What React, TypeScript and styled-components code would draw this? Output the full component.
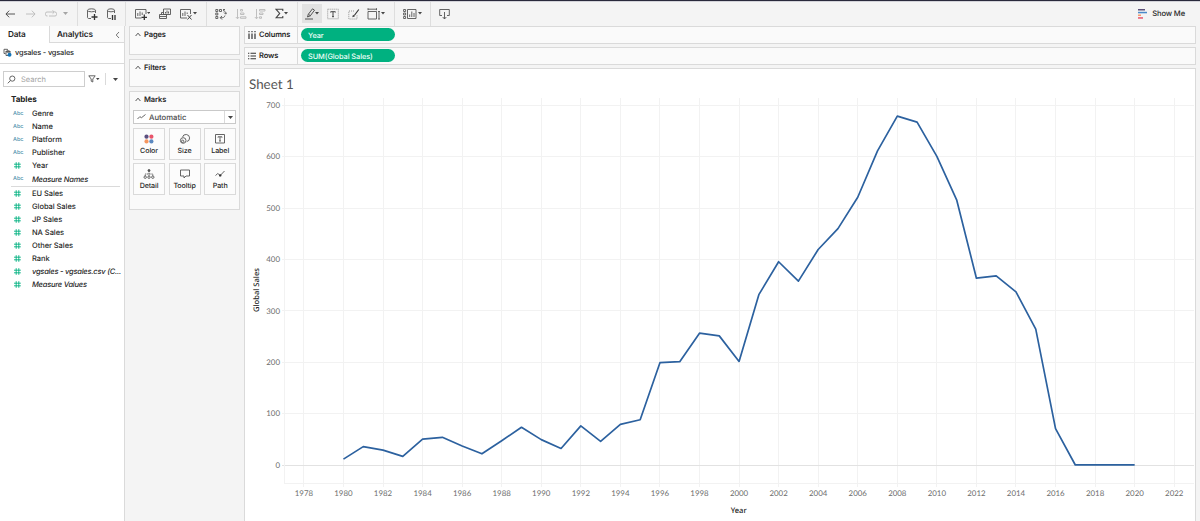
import type { ReactNode } from 'react';
import styled, { createGlobalStyle, css } from 'styled-components';

const color = {
	text: '#262626',
	muted: '#b9b9b9',
	border: '#dadada',
	surface: '#fafafa',
	background: '#f4f4f4',
	green: '#00b180',
	line: '#2c619f',
	dimension: '#4f93ad'
};

const GlobalStyle = createGlobalStyle`
	* {
		box-sizing: border-box;
	}
	body {
		background: ${color.background};
		color: ${color.text};
		font-family: Inter, 'Liberation Sans', sans-serif;
		font-size: 7.5px;
		font-weight: 500;
		margin: 0;
		overflow: hidden;
		text-rendering: geometricPrecision;
	}
	svg {
		display: block;
		flex: none;
	}
`;

const Page = styled.div`
	border-top: 1px solid #2a2a3c;
	display: flex;
	flex-direction: column;
	height: 521px;
	width: 1200px;
`;

const Toolbar = styled.div`
	align-items: stretch;
	border-top: 1px solid #d3d3d9;
	display: flex;
	height: 25px;
`;
const ToolGroup = styled.div<{ $width: number; $last?: boolean }>`
	border-right: ${p => (p.$last ? 'none' : '1px solid #dedede')};
	display: flex;
	padding-left: 4px;
	width: ${p => p.$width}px;
`;
const Tool = styled.div<{ $width: number; $active?: boolean }>`
	align-items: center;
	background: ${p => (p.$active ? '#e2e2e2' : 'none')};
	display: flex;
	justify-content: center;
	height: 19px;
	margin-top: 2px;
	width: ${p => p.$width}px;
`;
const ShowMe = styled.div`
	align-items: center;
	display: flex;
	font-size: 7.6px;
	gap: 5px;
	height: 23px;
	letter-spacing: -0.12px;
	margin-left: auto;
	padding-right: 15px;
`;

const Body = styled.div`
	display: flex;
	flex: 1;
	min-height: 0;
`;

const DataPane = styled.aside`
	background: #fff;
	border-right: 1px solid ${color.border};
	width: 125px;
`;
const Tabs = styled.div`
	display: flex;
	font-size: 8.2px;
	font-weight: 600;
	height: 17px;
	letter-spacing: -0.15px;
	line-height: 17px;
`;
const ActiveTab = styled.div`
	padding-left: 8px;
	width: 49px;
`;
const Tab = styled.div`
	align-items: center;
	background: ${color.surface};
	border-bottom: 1px solid ${color.border};
	border-left: 1px solid ${color.border};
	display: flex;
	flex: 1;
	justify-content: space-between;
	padding: 1px 4px 0 7px;
`;
const Source = styled.div`
	align-items: center;
	border-bottom: 1px solid ${color.border};
	display: flex;
	font-size: 7.4px;
	gap: 3px;
	height: 21px;
	letter-spacing: -0.15px;
	padding: 0 0 1px 3px;
`;
const SearchRow = styled.div`
	align-items: center;
	display: flex;
	height: 16px;
	margin: 7px 0 0 3px;
`;
const SearchBox = styled.div`
	align-items: center;
	background: #fff;
	border: 1px solid #cecece;
	color: #a3a3a3;
	display: flex;
	font-size: 7.5px;
	font-weight: 400;
	gap: 5px;
	height: 16px;
	padding-left: 3px;
	width: 82px;
`;
const FilterMenu = styled.div`
	border-right: 1px solid ${color.border};
	display: flex;
	height: 12px;
	align-items: center;
	margin-right: 7px;
	padding-left: 3px;
	width: 21px;
`;
const TablesTitle = styled.h3`
	font-size: 8.1px;
	font-weight: 700;
	letter-spacing: -0.1px;
	line-height: 12px;
	margin: 6px 0 2px 11px;
`;
const FieldList = styled.div<{ $divided?: boolean }>`
	margin: 0 4px 0 11px;
	${p =>
		p.$divided &&
		css`
			border-top: 1px solid ${color.border};
		`}
`;
const Field = styled.div<{ $italic?: boolean }>`
	align-items: center;
	display: flex;
	font-style: ${p => (p.$italic ? 'italic' : 'normal')};
	height: 13.12px;
	letter-spacing: ${p => (p.$italic ? '-0.22px' : '-0.05px')};
	white-space: nowrap;
`;
const FieldKind = styled.span`
	color: ${color.dimension};
	display: flex;
	flex: none;
	font-size: 5.5px;
	font-style: normal;
	font-weight: 500;
	letter-spacing: 0;
	padding-left: 2px;
	width: 21px;
`;

const Cards = styled.div`
	display: flex;
	flex-direction: column;
	gap: 4px;
	padding: 0 4px;
	width: 119px;
`;
const Card = styled.section<{ $height: number }>`
	background: ${color.surface};
	border: 1px solid ${color.border};
	height: ${p => p.$height}px;
`;
const CardTitle = styled.div`
	align-items: center;
	display: flex;
	font-size: 7.5px;
	font-weight: 600;
	gap: 3px;
	height: 15px;
	letter-spacing: -0.1px;
	padding-left: 5px;
`;
const MarkType = styled.div`
	align-items: center;
	background: #fff;
	border: 1px solid #c9c9c9;
	color: #4b4b4b;
	display: flex;
	font-size: 7.7px;
	height: 14px;
	line-height: 12px;
	margin: 3px 3px 4px;
	padding-left: 3px;
`;
const MarkTypeName = styled.span`
	flex: 1;
	padding: 1px 0 0 3px;
`;
const MarkTypeArrow = styled.span`
	align-items: center;
	border-left: 1px solid ${color.border};
	display: flex;
	height: 100%;
	justify-content: center;
	width: 11px;
`;
const MarkGrid = styled.div`
	display: grid;
	gap: 3px 3.6px;
	grid-template-columns: repeat(3, 32px);
	grid-auto-rows: 32px;
	padding: 0 3px;
`;
const MarkButton = styled.div`
	align-items: center;
	background: #fcfcfc;
	border: 1px solid ${color.border};
	display: flex;
	flex-direction: column;
	font-size: 7.1px;
	gap: 1px;
	letter-spacing: -0.1px;
	line-height: 9px;
	padding-top: 4px;
`;

const Workspace = styled.main`
	display: flex;
	flex: 1;
	flex-direction: column;
	gap: 3px;
	min-width: 0;
	padding-right: 4px;
`;
const Shelf = styled.div`
	background: ${color.surface};
	border: 1px solid ${color.border};
	display: flex;
	height: 18px;
`;
const ShelfName = styled.div`
	align-items: center;
	border-right: 1px solid ${color.border};
	display: flex;
	font-size: 7.5px;
	font-weight: 600;
	gap: 3px;
	letter-spacing: -0.12px;
	padding: 0 0 1px 3px;
	width: 53px;
`;
const Pill = styled.div`
	background: ${color.green};
	border-radius: 7px;
	color: #f0fffa;
	font-size: 7.4px;
	height: 13px;
	letter-spacing: -0.08px;
	line-height: 15px;
	margin: 1px 0 0 3px;
	padding-left: 7px;
	width: 94px;
`;
const Sheet = styled.section`
	background: #fff;
	border: 1px solid ${color.border};
	border-bottom: none;
	display: flex;
	flex: 1;
	flex-direction: column;
	min-height: 0;
`;
const SheetTitle = styled.h1`
	color: #555;
	font-family: Lato, 'Noto Sans', sans-serif;
	font-size: 13.4px;
	font-weight: 400;
	height: 28px;
	line-height: 31px;
	margin: 0;
	padding-left: 4px;
`;
const AxisLabel = styled.text`
	fill: #6f6f6f;
	font-family: Lato, 'Noto Sans', sans-serif;
	font-size: 7.9px;
	font-weight: 400;
`;
const AxisTitle = styled.text`
	fill: #222;
	font-family: 'Noto Sans', sans-serif;
	font-size: 7.6px;
	font-weight: 500;
	text-anchor: middle;
`;

type IconProps = {
	w?: number;
	h?: number;
	stroke?: string;
	children: ReactNode;
};

const Icon = ({ w = 12, h = 12, stroke = '#555', children }: IconProps) => (
	<svg
		width={w}
		height={h}
		viewBox={`0 0 ${w} ${h}`}
		fill="none"
		stroke={stroke}
		strokeWidth={0.9}
	>
		{children}
	</svg>
);

const Caret = ({ size = 5, fill = '#444' }) => (
	<svg width={size} height={size * 0.6} viewBox="0 0 10 6">
		<path d="M0 0h10L5 6z" fill={fill} />
	</svg>
);

const Chevron = () => (
	<Icon w={6} h={5} stroke="#444">
		<path d="M.6 4 3 1.2 5.4 4" />
	</Icon>
);

const HashIcon = () => (
	<Icon w={8} h={7} stroke={color.green}>
		<path d="M3.2.2v6.6M5.8.2v6.6M1 2.2h6.800M1 4.800h6.800" />
	</Icon>
);

const MainToolbar = () => (
	<Toolbar>
		<ToolGroup $width={78}>
			<Tool $width={12}>
				<Icon w={10} h={8} stroke="#444">
					<path d="M10 4H1M4.2.7.9 4l3.3 3.3" />
				</Icon>
			</Tool>
			<Tool $width={30}>
				<Icon w={10} h={8} stroke={color.muted}>
					<path d="M0 4h9M5.8.7 9.1 4 5.8 7.3" />
				</Icon>
			</Tool>
			<Tool $width={9}>
				<Icon w={12} h={8} stroke={color.muted}>
					<path d="M2.5 6H2a1.5 1.5 0 0 1-1.5-1.5v-1A1.5 1.5 0 0 1 2 2h7M7.6.3 9.3 2 7.6 3.7M9.5 2h.5a1.5 1.5 0 0 1 1.5 1.5v1A1.5 1.5 0 0 1 10 6H4" />
				</Icon>
			</Tool>
			<Tool $width={20}>
				<Caret size={5} fill="#a5a5a5" />
			</Tool>
		</ToolGroup>
		<ToolGroup $width={48}>
			<Tool $width={20}>
				<Icon>
					<path d="M5 10.5H3C2 10.5 1.500 10 1.500 9.500v-7M9.500 5V2.500" />
					<ellipse cx="5.500" cy="2.300" rx="4" ry="1.500" />
					<path d="M8.500 6v6M5.500 9h6" stroke="#333" strokeWidth={1.3} />
				</Icon>
			</Tool>
			<Tool $width={20}>
				<Icon>
					<path d="M5 10.500H3C2 10.500 1.500 10 1.500 9.500v-7M8.500 5V2.500" />
					<ellipse cx="5" cy="2.300" rx="3.500" ry="1.500" />
					<path d="M6.500 7v5M9 7v5" stroke="#333" strokeWidth={1.3} />
				</Icon>
			</Tool>
		</ToolGroup>
		<ToolGroup $width={81}>
			<Tool $width={25}>
				<Icon w={12} h={12}>
					<path d="M6.500 10H.5V1.500h10.500V6M2.800 8V5M5 8V3.500M7.200 7V4.500" />
					<path
						d="M9.300 6.500v5.500M6.500 9.300H12"
						stroke="#333"
						strokeWidth={1.3}
					/>
				</Icon>
				<Caret size={3.5} />
			</Tool>
			<Tool $width={19}>
				<Icon w={12} h={12}>
					<path d="M4.500 1H11.500v5.500h-7zM6.500 5.500V4M8 5.500V2.500M9.500 5.500V3.500M.5 6.500H7.500v4H.5zM2.500 6.500v-2h2M.5 8.500h7" />
				</Icon>
			</Tool>
			<Tool $width={28}>
				<Icon w={13} h={12}>
					<path d="M7 10H.5V1.500h10V6M2.800 8V5M5 8V3.500M7.200 6V4.500" />
					<path d="m7.500 7 4 4.500M11.500 7l-4 4.500" stroke="#333" />
				</Icon>
				<Caret size={4} />
			</Tool>
		</ToolGroup>
		<ToolGroup $width={91}>
			<Tool $width={20}>
				<Icon>
					<path d="M.8 1.500h2v2h-2zM4.500 1.500h2v2h-2zM.8 5h2v2h-2zM.8 8.500h2v2h-2zM8 1.500h2" />
					<path d="M8 2.500c2 .3 2.700 1.500 2.700 3.200M9 4.500l1.700 1.700 1.200-1.700M10 7.500C9.500 9.500 8 10 5.500 9.700M7 8 5.200 9.700 7 11.500" />
				</Icon>
			</Tool>
			<Tool $width={19}>
				<Icon stroke={color.muted}>
					<path d="M2.500 1v9.500M.8 9l1.700 1.800L4.200 9M5.500 1.500h2v1.500h-2zM5.500 5h3.500v1.500H5.500zM5.500 8.800h5.500v1.500H5.500z" />
				</Icon>
			</Tool>
			<Tool $width={20}>
				<Icon stroke={color.muted}>
					<path d="M2.500 1v9.500M.8 9l1.700 1.800L4.200 9M5.500 1.500h5.500v1.500H5.500zM5.500 5h3.500v1.500H5.500zM5.500 8.800h2v1.500h-2z" />
				</Icon>
			</Tool>
			<Tool $width={23}>
				<Icon w={9} h={11} stroke="#444">
					<path
						d="M7.800 3V1.200H1L4.700 5.400 1 9.800h6.800V8"
						strokeWidth={1.1}
					/>
				</Icon>
				<Caret size={4} />
			</Tool>
		</ToolGroup>
		<ToolGroup $width={97}>
			<Tool $width={20} $active>
				<Icon w={10} h={12} stroke="#444">
					<path d="m2.500 9 .8-2.700L7.500.8l2 1.400-4.200 5.600zM3.500 6.300l2 1.500M0 11h8" />
				</Icon>
				<Caret size={4} />
			</Tool>
			<Tool $width={21}>
				<Icon stroke="#888">
					<path d="M.7 1.200h10.600v9.600H.7z" strokeDasharray="1 1" />
					<path d="M3.700 4.500V3.700h4.600v.8M6 3.700v5M5 8.700h2" stroke="#333" />
				</Icon>
			</Tool>
			<Tool $width={21}>
				<Icon stroke="#888">
					<path d="M6 3H.8v8H9V7" strokeDasharray="1 1" />
					<path d="m10.800 1.500-4.500 6" stroke="#333" strokeWidth={1.2} />
					<path d="M4.300 9.300 5 6.800l2 1.500z" fill="#333" stroke="none" />
				</Icon>
			</Tool>
			<Tool $width={24}>
				<Icon w={14} h={12}>
					<path d="M1 3.500h8.500v7.500H1zM1 .2v2M9.500.2v2M1 1.200h8.500M12 3.500v7.500M11 3.500h2M11 11h2" />
				</Icon>
				<Caret size={4} />
			</Tool>
		</ToolGroup>
		<ToolGroup $width={36}>
			<Tool $width={27}>
				<Icon w={15} h={12}>
					<path d="M4.500 1.500H13v9H4.500zM6.700 9V6.500M8.800 9V3.500M11 9V5" />
					<path d="M.6 1.500h2v2h-2zM.6 5h2v2h-2zM.6 8.500h2v2h-2z" />
				</Icon>
				<Caret size={4} />
			</Tool>
		</ToolGroup>
		<ToolGroup $width={25} $last>
			<Tool $width={18}>
				<Icon w={11} h={12}>
					<path d="M3 7.500H.7V1.500h9.600v6H8M5.500 4v7M3.700 9l1.800 2 1.800-2" />
				</Icon>
			</Tool>
		</ToolGroup>
		<ShowMe>
			<svg width="9" height="10" viewBox="0 0 9 10">
				<path fill="#5b4f78" d="M0 0h7v1.500H0z" />
				<path fill="#4a8ac9" d="M0 2.800h9v1.500H0z" />
				<path fill="#f59b6c" d="M0 5.500h3v1.500H0z" />
				<path fill="#e8546a" d="M0 8.200h5v1.500H0z" />
			</svg>
			Show Me
		</ShowMe>
	</Toolbar>
);

const dimensions = [
	{ name: 'Genre' },
	{ name: 'Name' },
	{ name: 'Platform' },
	{ name: 'Publisher' },
	{ name: 'Year', numeric: true },
	{ name: 'Measure Names', italic: true }
];

const measures = [
	{ name: 'EU Sales' },
	{ name: 'Global Sales' },
	{ name: 'JP Sales' },
	{ name: 'NA Sales' },
	{ name: 'Other Sales' },
	{ name: 'Rank' },
	{ name: 'vgsales - vgsales.csv (C...', italic: true },
	{ name: 'Measure Values', italic: true }
];

const DataSidebar = () => (
	<DataPane>
		<Tabs>
			<ActiveTab>Data</ActiveTab>
			<Tab>
				Analytics
				<Icon w={5} h={8} stroke="#666">
					<path d="M4 1 1.200 4 4 7" />
				</Icon>
			</Tab>
		</Tabs>
		<Source>
			<Icon w={9} h={9}>
				<path d="M1 5.500V1.300h3.500v1M1 5.500h1.500M3 7.500V3.500h4v2M3 7.500h2" />
				<ellipse cx="5" cy="3.500" rx="2" ry=".8" />
				<circle cx="6.500" cy="6.700" r="2" fill="#1475b8" stroke="none" />
			</Icon>
			vgsales - vgsales
		</Source>
		<SearchRow>
			<SearchBox>
				<Icon w={9} h={9}>
					<circle cx="5.300" cy="3.600" r="2.600" />
					<path d="M3.500 5.500.8 8.300" />
				</Icon>
				Search
			</SearchBox>
			<FilterMenu>
				<Icon w={8} h={8}>
					<path d="M.8.800h6.400L4.800 4v3L3.200 6.200V4z" />
				</Icon>
				<Caret size={3.5} />
			</FilterMenu>
			<Caret size={5} />
		</SearchRow>
		<TablesTitle>Tables</TablesTitle>
		<FieldList>
			{dimensions.map(field => (
				<Field key={field.name} $italic={field.italic}>
					<FieldKind>{field.numeric ? <HashIcon /> : 'Abc'}</FieldKind>
					{field.name}
				</Field>
			))}
		</FieldList>
		<FieldList $divided>
			{measures.map(field => (
				<Field key={field.name} $italic={field.italic}>
					<FieldKind>
						<HashIcon />
					</FieldKind>
					{field.name}
				</Field>
			))}
		</FieldList>
	</DataPane>
);

const markButtons = [
	{
		name: 'Color',
		icon: (
			<svg width="12" height="12" viewBox="0 0 12 12">
				<circle cx="3.500" cy="3.700" r="2.100" fill="#5b5080" />
				<circle cx="8.400" cy="3.700" r="2.100" fill="#e8546a" />
				<circle cx="3.500" cy="8.400" r="2.100" fill="#f5965f" />
				<circle cx="8.400" cy="8.400" r="2.100" fill="#5a88c0" />
			</svg>
		)
	},
	{
		name: 'Size',
		icon: (
			<Icon>
				<path d="M3.500 4.200a3.600 3.600 0 1 1 4.200 4.400" />
				<circle cx="4.200" cy="7.500" r="2.800" />
				<circle cx="3.700" cy="8.300" r="1.200" />
			</Icon>
		)
	},
	{
		name: 'Label',
		icon: (
			<Icon>
				<path d="M1.500 1.500h9v8.500h-9zM4 4.600V3.800h4v.8M6 3.800v4.200M5 8h2" />
			</Icon>
		)
	},
	{
		name: 'Detail',
		icon: (
			<Icon>
				<path d="M6 3v5M2.200 8V6h7.600v2" strokeDasharray="1.200 .6" />
				<circle cx="6" cy="2.500" r="1" fill="#444" />
				<circle cx="2.200" cy="9.200" r="1.200" />
				<circle cx="6" cy="9.200" r="1.200" />
				<circle cx="9.800" cy="9.200" r="1.200" />
			</Icon>
		)
	},
	{
		name: 'Tooltip',
		icon: (
			<Icon>
				<path d="M1.500 2h9v6H7L5 10V8H1.500z" />
			</Icon>
		)
	},
	{
		name: 'Path',
		icon: (
			<Icon>
				<path d="m1.500 7.500 2.300-2 2.400 2L10.500 3" />
				<circle cx="6.200" cy="7.400" r="1.200" fill="#333" stroke="none" />
			</Icon>
		)
	}
];

const CardColumn = () => (
	<Cards>
		<Card $height={29}>
			<CardTitle>
				<Chevron />
				Pages
			</CardTitle>
		</Card>
		<Card $height={28}>
			<CardTitle>
				<Chevron />
				Filters
			</CardTitle>
		</Card>
		<Card $height={119}>
			<CardTitle>
				<Chevron />
				Marks
			</CardTitle>
			<MarkType>
				<Icon w={9} h={8}>
					<path d="m.5 6 2.300-2.300 1.700 1L8.500 1.500" />
				</Icon>
				<MarkTypeName>Automatic</MarkTypeName>
				<MarkTypeArrow>
					<Caret size={5} />
				</MarkTypeArrow>
			</MarkType>
			<MarkGrid>
				{markButtons.map(button => (
					<MarkButton key={button.name}>
						{button.icon}
						{button.name}
					</MarkButton>
				))}
			</MarkGrid>
		</Card>
	</Cards>
);

// Global sales by year, in millions. 2018 and 2019 have no records.
const sales: [number, number][] = [
	[1980, 11.38],
	[1981, 35.77],
	[1982, 28.86],
	[1983, 16.79],
	[1984, 50.36],
	[1985, 53.94],
	[1986, 37.07],
	[1987, 21.74],
	[1988, 47.22],
	[1989, 73.45],
	[1990, 49.39],
	[1991, 32.23],
	[1992, 76.16],
	[1993, 45.98],
	[1994, 79.17],
	[1995, 88.11],
	[1996, 199.15],
	[1997, 200.98],
	[1998, 256.47],
	[1999, 251.27],
	[2000, 201.56],
	[2001, 331.47],
	[2002, 395.52],
	[2003, 357.85],
	[2004, 419.31],
	[2005, 459.94],
	[2006, 521.04],
	[2007, 611.13],
	[2008, 678.9],
	[2009, 667.3],
	[2010, 600.45],
	[2011, 515.99],
	[2012, 363.54],
	[2013, 368.11],
	[2014, 337.05],
	[2015, 264.44],
	[2016, 70.93],
	[2017, 0.05],
	[2020, 0.29]
];

const years = Array.from({ length: 23 }, (_, i) => 1978 + i * 2);
const ticks = [0, 100, 200, 300, 400, 500, 600, 700];

const x = (year: number) => 58.9 + (year - 1978) * 19.78;
const y = (value: number) => 368 - value * 0.5139;

const SalesChart = () => (
	<svg width="950" height="424" viewBox="0 0 950 424">
		<g stroke="#f2f2f2" shapeRendering="crispEdges">
			{years.map(year => (
				<line key={year} x1={x(year)} x2={x(year)} y1={1} y2={390} />
			))}
			{ticks.map(tick => (
				<line
					key={tick}
					x1={37}
					x2={949}
					y1={y(tick)}
					y2={y(tick)}
					stroke={tick === 0 ? '#e2e2e2' : '#f2f2f2'}
				/>
			))}
			<path d="M39.500 1v385.500H949" fill="none" />
		</g>
		{ticks.map(tick => (
			<AxisLabel key={tick} x={35} y={y(tick) + 2.8} textAnchor="end">
				{tick}
			</AxisLabel>
		))}
		{years.map(year => (
			<AxisLabel key={year} x={x(year)} y={398.6} textAnchor="middle">
				{year}
			</AxisLabel>
		))}
		<AxisTitle x={493.7} y={416}>
			Year
		</AxisTitle>
		<AxisTitle transform="translate(14 193) rotate(-90)">Global Sales</AxisTitle>
		<polyline
			points={sales.map(([year, value]) => `${x(year)},${y(value)}`).join(' ')}
			fill="none"
			stroke={color.line}
			strokeWidth={1.7}
			strokeLinejoin="round"
		/>
	</svg>
);

const App = () => (
	<>
		<GlobalStyle />
		<Page>
			<MainToolbar />
			<Body>
				<DataSidebar />
				<CardColumn />
				<Workspace>
					<Shelf>
						<ShelfName>
							<Icon w={8} h={8} stroke="#333">
								<path
									d="M1 0v1.300M1 2.500V8M4 0v1.300M4 2.500V8M7 0v1.300M7 2.500V8"
									strokeWidth={1.2}
								/>
							</Icon>
							Columns
						</ShelfName>
						<Pill>Year</Pill>
					</Shelf>
					<Shelf>
						<ShelfName>
							<Icon w={8} h={8} stroke="#333">
								<path
									d="M0 1.300h1.300M2.500 1.300H8M0 4h1.300M2.500 4H8M0 6.700h1.300M2.500 6.700H8"
									strokeWidth={1.1}
								/>
							</Icon>
							Rows
						</ShelfName>
						<Pill>SUM(Global Sales)</Pill>
					</Shelf>
					<Sheet>
						<SheetTitle>Sheet 1</SheetTitle>
						<SalesChart />
					</Sheet>
				</Workspace>
			</Body>
		</Page>
	</>
);

export default App;
